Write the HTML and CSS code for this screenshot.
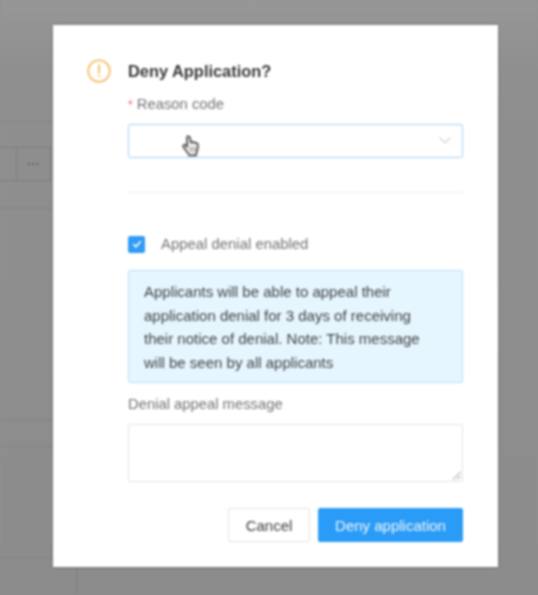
FILE: index.html
```html
<!DOCTYPE html>
<html lang="en">
<head>
<meta charset="utf-8">
<title>Deny Application</title>
<link rel="stylesheet" href="styles.css">
</head>
<body>
<div class="page">
  <div class="backdrop">
    <div class="bg-rows">
      <div class="bg-row bg-a"></div>
      <div class="bg-row bg-b">
        <span class="bg-cell bg-cell-first"></span>
        <span class="bg-cell bg-cell-more">···</span>
      </div>
      <div class="bg-row bg-c"></div>
      <div class="bg-row bg-d"></div>
      <div class="bg-row bg-e"></div>
      <div class="bg-foot"></div>
    </div>
  </div>
  <section class="modal">
    <svg class="warn-icon" viewBox="0 0 24 24" width="24" height="24" aria-hidden="true">
      <circle cx="12" cy="12" r="10.8" fill="none" stroke="#f3b95c" stroke-width="1.6"/>
      <path d="M12 6.500v7" stroke="#f3b95c" stroke-width="1.800" stroke-linecap="round"/>
      <circle cx="12" cy="17" r="1.100" fill="#f3b95c"/>
    </svg>
    <div class="content">
      <h1 class="title">Deny Application?</h1>
      <label class="label label-reason"><span class="req">*</span> Reason code</label>
      <div class="select">
        <svg class="pointer" viewBox="0 0 18 23" width="18" height="23" aria-hidden="true">
          <path d="M5.400 1.500c1-.7 2.400 0 2.700 1.300l.8 4.700c.6-.9 2-.8 2.500.2.700-.7 2-.5 2.400.5.700-.4 1.900 0 2 1.100.3 2.300.1 4.700-.7 6.700-.5 1.300-1 2.500-1 4.400H7c-.4-1.700-1.400-3-2.700-4.400L1.600 12.300c-.8-1-.5-2.200.4-2.600.8-.3 1.700.2 2.500 1.200l.6.800-.1-8.200c-.1-.8 0-1.500.4-2z" fill="#ededed" stroke="#4f4f4f" stroke-width="1.700" stroke-linejoin="round"/>
          <path d="M8.500 12v4.500M11 12v4.500M13.500 12v4.500" stroke="#8a8a8a" stroke-width="1"/>
        </svg>
        <svg class="chevron" viewBox="0 0 12 7" width="12" height="7" aria-hidden="true">
          <path d="M.7.7 6 6 11.300.7" fill="none" stroke="#cfcfcf" stroke-width="1.100"/>
        </svg>
      </div>
      <hr class="divider">
      <div class="check-row">
        <span class="checkbox">
          <svg viewBox="0 0 12 10" width="10" height="8" aria-hidden="true"><path d="M1.200 5 4.600 8.400 10.800 1.500" fill="none" stroke="#fff" stroke-width="2"/></svg>
        </span>
        <span class="check-label">Appeal denial enabled</span>
      </div>
      <div class="info">Applicants will be able to appeal their application denial for 3 days of receiving their notice of denial. Note: This message will be seen by all applicants</div>
      <label class="label label-msg">Denial appeal message</label>
      <div class="textarea">
        <svg class="grip" viewBox="0 0 9 9" width="9" height="9" aria-hidden="true"><path d="M1 8.500 8.500 1M5 8.500 8.500 5" stroke="#8a8a8a" stroke-width="1"/></svg>
      </div>
      <div class="actions">
        <button class="btn btn-cancel" type="button">Cancel</button>
        <button class="btn btn-primary" type="button">Deny application</button>
      </div>
    </div>
  </section>
</div>
</body>
</html>
```
FILE: styles.css
```css
* { box-sizing: border-box; }
html, body { margin: 0; padding: 0; height: 100%; }
body {
  overflow: hidden;
  background: #8f8f8f;
  font-family: "Liberation Sans", Arial, sans-serif;
}
.page {
  position: relative;
  width: 538px;
  height: 595px;
  overflow: hidden;
  filter: blur(0.8px);
}
.backdrop {
  width: 538px;
  height: 595px;
  background: linear-gradient(180deg, #979797 0, #8f8f8f 70px, #8c8c8c 100%);
}
.bg-rows { width: 77px; display: flex; flex-direction: column; height: 100%; }
.bg-row { border-bottom: 1px solid #838383; flex: none; }
.bg-a { height: 122px; }
.bg-b {
  height: 87px;
  padding-top: 25px;
  display: flex;
  align-items: flex-start;
}
.bg-cell {
  height: 34px;
  border: 1px solid #7f7f7f;
  border-left: 0;
  display: block;
}
.bg-cell-first { width: 17px; }
.bg-cell-more {
  width: 34px;
  color: #5f5f5f;
  font-size: 13px;
  line-height: 31px;
  text-align: center;
  font-weight: bold;
}
.bg-c { height: 212px; }
.bg-d { height: 26px; }
.bg-e { height: 111px; }
.bg-foot { flex: 1; border-right: 1px solid #7d7d7d; }

.modal {
  position: absolute;
  left: 53px;
  top: 25px;
  width: 445px;
  height: 542px;
  background: #fff;
  box-shadow: 0 0 3px rgba(0, 0, 0, .25);
  padding: 34px 35px 0 34px;
  display: flex;
  align-items: flex-start;
  gap: 17px;
}
.warn-icon { flex: none; }
.content { flex: 1; min-width: 0; }
.title {
  margin: 0;
  font-size: 16.400px;
  line-height: 24px;
  font-weight: bold;
  color: #383838;
}
.label {
  display: block;
  font-size: 14.800px;
  line-height: 18px;
  color: #737373;
}
.label-reason { margin-top: 12px; }
.req { color: #ee5a62; font-size: 12px; }
.select {
  position: relative;
  height: 34px;
  margin-top: 10px;
  border: 1.500px solid #a0d0f7;
  border-radius: 3px;
  background: #fff;
}
.pointer { position: absolute; left: 53px; top: 10px; }
.chevron { position: absolute; right: 11px; top: 12px; }
.divider {
  height: 1px;
  margin: 34px 0 0;
  border: 0;
  background: #f0f0f0;
}
.check-row {
  display: flex;
  align-items: center;
  gap: 16px;
  height: 18px;
  margin-top: 42px;
}
.checkbox {
  width: 17px;
  height: 17px;
  background: #2f9bf5;
  border-radius: 2px;
  display: flex;
  align-items: center;
  justify-content: center;
}
.check-label { font-size: 14.900px; color: #737373; }
.info {
  margin-top: 17px;
  height: 113px;
  padding: 9px 35px 0 15px;
  background: #e6f6fe;
  border: 1px solid #b5e1f8;
  border-radius: 2px;
  font-size: 15px;
  line-height: 23.600px;
  color: #3f4144;
}
.label-msg { margin-top: 12px; }
.textarea {
  position: relative;
  height: 58px;
  margin-top: 11px;
  border: 1px solid #e4e4e4;
  border-radius: 2px;
}
.grip { position: absolute; right: 1px; bottom: 1px; }
.actions {
  display: flex;
  justify-content: flex-end;
  gap: 8px;
  margin-top: 26px;
}
.btn {
  height: 34px;
  border-radius: 2px;
  font-family: inherit;
  font-size: 15px;
  padding: 0;
}
.btn-cancel {
  width: 82px;
  background: #fff;
  border: 1px solid #e2e2e2;
  color: #3c3c3c;
}
.btn-primary {
  width: 145px;
  background: #2a9bf6;
  border: 1px solid #2a9bf6;
  color: #f0f7fd;
}
```
